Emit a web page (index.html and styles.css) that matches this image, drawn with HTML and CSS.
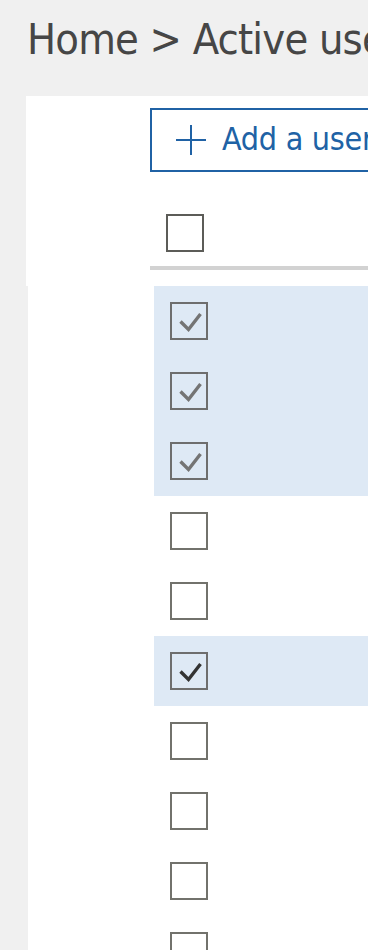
FILE: index.html
```html
<!DOCTYPE html>
<html>
<head>
<meta charset="utf-8">
<link rel="stylesheet" href="styles.css">
</head>
<body>
<h1 class="crumb">Home &gt; Active users</h1>
<section class="panel">
  <button class="add-btn" type="button">
    <svg class="plus" width="30" height="30" viewBox="0 0 30 30"><path d="M15 0V30M0 15H30" stroke="currentColor" stroke-width="2" fill="none"/></svg>
    <span>Add a user</span>
  </button>
  <div class="head-row"><span class="box box-head"></span></div>
  <div class="head-rule"></div>
</section>
<section class="list">
  <div class="row sel"><span class="box"><svg viewBox="0 0 38 38"><path class="chk soft" d="M10.5 19.5L18.5 27.5L30.5 12"/></svg></span></div>
  <div class="row sel"><span class="box"><svg viewBox="0 0 38 38"><path class="chk soft" d="M10.5 19.5L18.5 27.5L30.5 12"/></svg></span></div>
  <div class="row sel"><span class="box"><svg viewBox="0 0 38 38"><path class="chk soft" d="M10.5 19.5L18.5 27.5L30.5 12"/></svg></span></div>
  <div class="row"><span class="box"></span></div>
  <div class="row"><span class="box"></span></div>
  <div class="row sel"><span class="box"><svg viewBox="0 0 38 38"><path class="chk dark" d="M10.5 19.5L18.5 27.5L30.5 12"/></svg></span></div>
  <div class="row"><span class="box"></span></div>
  <div class="row"><span class="box"></span></div>
  <div class="row"><span class="box"></span></div>
  <div class="row"><span class="box"></span></div>
</section>
</body>
</html>
```
FILE: styles.css
```css
html, body {
  margin: 0;
  padding: 0;
}
body {
  background: #f0f0f0;
  font-family: "DejaVu Sans Condensed", "DejaVu Sans", sans-serif;
  overflow: hidden;
  width: 368px;
  height: 950px;
}
.crumb {
  margin: 0;
  padding: 14px 0 0 27px;
  font-size: 43px;
  line-height: 50px;
  letter-spacing: -0.8px;
  font-weight: normal;
  color: #464646;
  white-space: nowrap;
}
.panel {
  margin: 32px 0 0 26px;
  background: #fff;
  padding: 12px 0 16px 124px;
  width: 600px;
}
.add-btn {
  display: flex;
  align-items: center;
  gap: 16px;
  height: 64px;
  width: 400px;
  box-sizing: border-box;
  border: 2px solid #2062a5;
  background: #fff;
  color: #2062a5;
  padding: 0 0 0 24px;
  margin: 0;
  font-family: inherit;
  font-size: 32px;
  letter-spacing: -0.3px;
  white-space: nowrap;
}
.plus {
  display: block;
  flex: none;
}
.add-btn span {
  line-height: 36px;
  position: relative;
  top: -1px;
}
.head-row {
  padding: 42px 0 14px 16px;
}
.head-rule {
  height: 4px;
  background: #d2d2d2;
}
.box {
  display: block;
  width: 38px;
  height: 38px;
  box-sizing: border-box;
  border: 2px solid #72726c;
  background: #fff;
}
.box-head {
  border-color: #5c5c58;
}
.sel .box {
  background: transparent;
  border-color: #6e6e6e;
}
.box svg {
  display: block;
  width: 38px;
  height: 38px;
  margin: -2px;
}
.chk {
  fill: none;
  stroke-width: 3.4;
  stroke-linecap: butt;
  stroke-linejoin: miter;
}
.chk.soft {
  stroke: #747474;
}
.chk.dark {
  stroke: #333333;
}
.list {
  margin-left: 28px;
  background: #fff;
  padding-left: 126px;
  height: 700px;
}
.row {
  height: 70px;
  display: flex;
  align-items: center;
  padding-left: 16px;
}
.row.sel {
  background: #dee9f5;
}
```
